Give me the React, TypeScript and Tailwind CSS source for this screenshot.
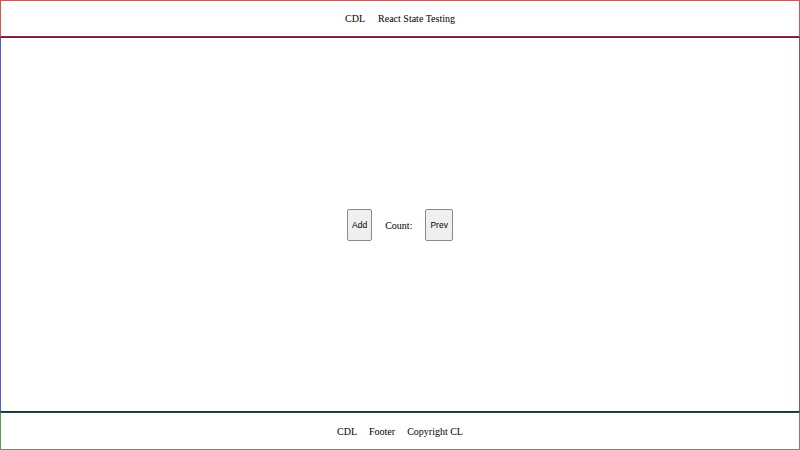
export default function App() {
  return (
    <div className="flex flex-col h-[450px] w-full bg-white text-black font-['Liberation_Serif',serif] text-[10px]">
      <header className="flex justify-center items-center gap-[13px] h-[37px] border border-[#c65a5a] border-b-[#8a2a4a]">
        <span>CDL</span>
        <span>React State Testing</span>
      </header>

      <main className="flex-1 flex justify-center items-center gap-[13px] border border-[#5a5ac6] border-t-[#3a2a7a] border-b-[#1a2a4a]">
        <button className="h-[32px] px-[4px] pt-[2px] bg-[#efefef] border border-[#8a8a8a] rounded-[2px] font-['Liberation_Sans',sans-serif] text-[8.5px]">
          Add
        </button>
        <span className="pt-[1px]">Count:</span>
        <button className="h-[32px] px-[4px] pt-[2px] bg-[#efefef] border border-[#8a8a8a] rounded-[2px] font-['Liberation_Sans',sans-serif] text-[8.5px]">
          Prev
        </button>
      </main>

      <footer className="flex justify-center items-center gap-[12px] h-[38px] border border-[#5a9a5a] border-t-[#2a4a4a]">
        <span>CDL</span>
        <span>Footer</span>
        <span>Copyright CL</span>
      </footer>
    </div>
  );
}
